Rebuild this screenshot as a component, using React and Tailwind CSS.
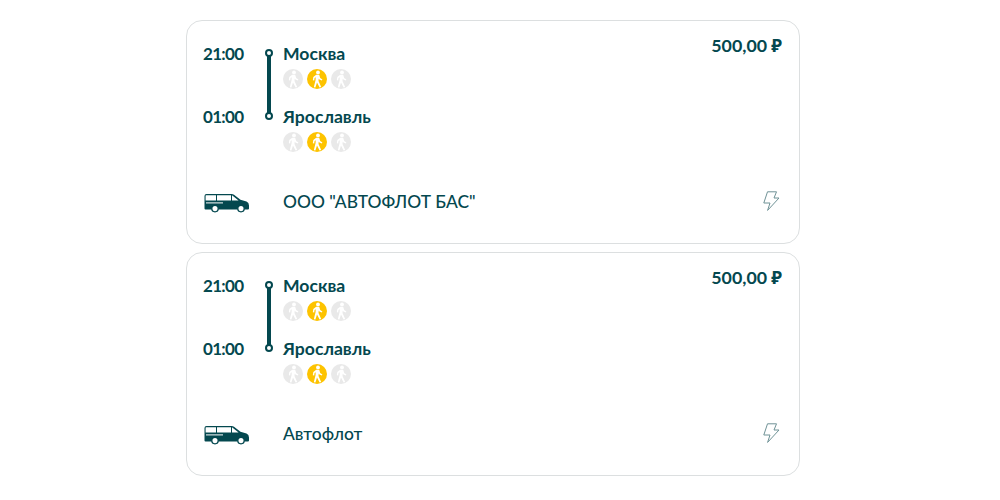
import React from "react";

const dark = "text-[#04484f]";

function Walker({ color }) {
  return (
    <svg viewBox="0 0 20 20" className="w-5 h-5 block">
      <circle cx="10" cy="10" r="10" fill={color} />
      <circle cx="11" cy="3.4" r="1.9" fill="#fff" />
      <path d="M9.2 5.8 L12.2 5.8 L13.2 9 L15.4 10.4 L14.7 11.6 L12 10.2 L11.7 9.4 L11.5 12 L14.2 18 L12.6 18.6 L10 13.6 L8.4 18.6 L6.8 18.2 L8.6 11 L8.7 8.2 L7.6 9 L7.2 11.6 L5.8 11.3 L6.3 8 Z" fill="#fff" />
    </svg>
  );
}

function Walkers() {
  return (
    <div className="flex gap-1 mt-[3px]">
      <Walker color="#e9e9e9" />
      <Walker color="#fdc300" />
      <Walker color="#e9e9e9" />
    </div>
  );
}

function Van() {
  return (
    <svg viewBox="0 -1 46 20" className="w-[46px] h-5 block overflow-visible">
      <path d="M2.5 1 H27.5 Q29 1 30 1.8 L36.5 6.8 L42.5 8.6 Q45 9.6 45 12.5 V15.5 Q45 16.5 44 16.5 H1.5 Q0.5 16.5 0.5 15.5 V3 Q0.5 1 2.5 1 Z" fill="#04484f" />
      <path d="M2 2.2 H12 V7.6 H1.6 V3 Q1.6 2.2 2 2.2 Z M13 2.2 H27 V7.6 H13 Z M28 2.2 L34.6 7.6 H28 Z" fill="#fff" />
      <rect x="2" y="9.4" width="17" height="1" fill="#fff" />
      <circle cx="11" cy="15.6" r="3.2" fill="#fff" stroke="#04484f" strokeWidth="1.3" />
      <circle cx="37" cy="15.6" r="3.2" fill="#fff" stroke="#04484f" strokeWidth="1.3" />
    </svg>
  );
}

function Bolt() {
  return (
    <svg viewBox="0 0 17 20" className="w-[17px] h-5 block" fill="none" stroke="#6f9296" strokeWidth="1" strokeLinejoin="round">
      <path d="M4.5 0.8 H13.5 L11 7 H16 L4.6 19.4 L7 12 H0.8 Z" />
    </svg>
  );
}

function Card({ carrier }) {
  return (
    <div className={`w-[614px] h-56 rounded-2xl border border-[#dcdfe0] bg-white flex flex-col pl-4 pr-[17px] pt-4 pb-[28px] ${dark}`}>
      <div className="flex flex-1">
        <div className="w-[60px] flex flex-col text-[17px] leading-[34px] font-bold tracking-[-0.7px]">
          <div className="h-[63px]">21:00</div>
          <div>01:00</div>
        </div>
        <div className="w-[16px] relative flex flex-col items-center pt-[13px] -ml-[2px] mr-[2px]">
          <div className="w-1 h-[63px] bg-[#04484f]" />
          <div className="absolute top-[12px] w-2 h-2 rounded-full bg-white border-2 border-[#04484f]" />
          <div className="absolute top-[75px] w-2 h-2 rounded-full bg-white border-2 border-[#04484f]" />
        </div>
        <div className="flex-1 pl-[4px] text-[17.6px] font-bold leading-[34px]">
          <div className="h-[63px]">
            <div className="h-[29px]">Москва</div>
            <Walkers />
          </div>
          <div>
            <div className="h-[29px]">Ярославль</div>
            <Walkers />
          </div>
        </div>
        <div className="text-[17.8px] font-bold leading-[18px] -mt-[1px]">500,00 ₽</div>
      </div>
      <div className="flex items-center">
        <div className="w-[80px] pl-[1px]"><Van /></div>
        <div className="flex-1 text-[17.4px] font-medium">{carrier}</div>
        <div className="mr-[2px] -mt-[1px]"><Bolt /></div>
      </div>
    </div>
  );
}

export default function App() {
  return (
    <div className="w-[1000px] h-[500px] bg-white flex flex-col items-start gap-2 pt-5 pl-[186px] overflow-hidden font-['Lato','Noto_Sans',sans-serif]">
      <Card carrier={'ООО "АВТОФЛОТ БАС"'} />
      <Card carrier="Автофлот" />
    </div>
  );
}
